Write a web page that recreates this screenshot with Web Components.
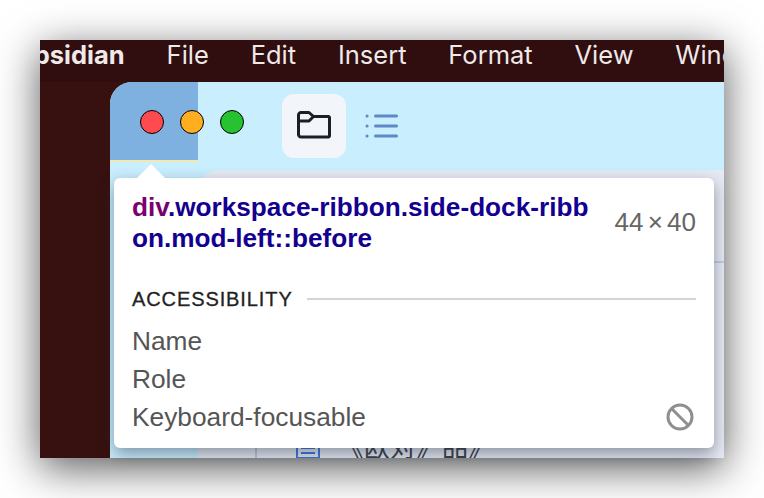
<!DOCTYPE html>
<html>
<head>
<meta charset="utf-8">
<title>Inspect tooltip</title>
<style>
html, body { margin: 0; background: #fff; }
body { width: 764px; height: 498px; overflow: hidden; padding: 40px; box-sizing: border-box; }
</style>
</head>
<body>
<shot-frame>
  <menu-bar slot="menu"></menu-bar>
  <app-window slot="app"></app-window>
  <inspect-tip slot="tip"></inspect-tip>
</shot-frame>

<script>
class ShotFrame extends HTMLElement {
  constructor() {
    super();
    this.attachShadow({ mode: 'open' }).innerHTML = `
      <style>
      :host { display: flex; flex-direction: column; position: relative; width: 684px; height: 418px; background: #36110f; box-shadow: 0 10px 40px rgba(0,0,0,.65); }
      .clip { display: flex; flex-direction: column; flex: 1; min-height: 0; overflow: hidden; }
      .desk { display: flex; flex: 1; min-height: 0; padding-left: 70px; }
      </style>
      <div class="clip">
        <slot name="menu"></slot>
        <div class="desk"><slot name="app"></slot></div>
      </div>
      <slot name="tip"></slot>
    `;
  }
}

class MenuBar extends HTMLElement {
  constructor() {
    super();
    this.attachShadow({ mode: 'open' }).innerHTML = `
      <style>
      :host { display: flex; height: 42px; flex: none; box-sizing: border-box; padding-bottom: 12px; align-items: center; background: #300d0f; color: #efe9e8; font: 25.5px/30px Inter, "Liberation Sans", sans-serif; overflow: hidden; white-space: nowrap; }
      b { font-weight: 700; margin-left: -26px; margin-right: 42px; flex: none; }
      span { margin-right: 41.8px; flex: none; }
      </style>
      <b>Obsidian</b><span>File</span><span>Edit</span><span>Insert</span><span>Format</span><span>View</span><span>Window</span>
    `;
  }
}

class AppWindow extends HTMLElement {
  constructor() {
    super();
    this.attachShadow({ mode: 'open' }).innerHTML = `
      <style>
      :host { display: flex; flex-direction: column; flex: 1; position: relative; min-width: 0; background: #c9eefe; border-top-left-radius: 22px; overflow: hidden; }
      .top { display: flex; height: 88px; flex: none; align-items: flex-start; padding: 12px 0 0 172px; box-sizing: border-box; }
      .btn { width: 64px; height: 64px; border-radius: 12px; display: flex; align-items: center; justify-content: center; margin-right: 14px; }
      .btn.on { background: #f2f6fb; }
      .btn.on svg { margin-bottom: 2px; }
      .btn.plain { width: 40px; }
      .hl { position: absolute; left: 0; top: 0; width: 88px; height: 78px; background: #7fb1e0; border-bottom: 2px solid #f2e8b0; }
      .lights { position: absolute; left: 30px; top: 28px; display: flex; gap: 16px; }
      .lights i { width: 24px; height: 24px; box-sizing: border-box; border-radius: 50%; border: 1px solid; }
      .r { background: #ff4a4f; border-color: #d8393f; }
      .y { background: #ffae22; border-color: #dc8f14; }
      .g { background: #27c232; border-color: #1fa528; }
      .body { display: flex; flex: 1; min-height: 0; padding-left: 88px; }
      .doc { flex: 1; display: flex; flex-direction: column; background: #e6eaf3; border-top-left-radius: 22px; overflow: hidden; }
      .tabs { height: 93px; flex: none; box-sizing: border-box; border-bottom: 2px solid #bcd0e6; }
      .pane { flex: 1; display: flex; min-height: 0; }
      .gutter { width: 57px; border-right: 2px solid #c3c8d0; flex: none; }
      .line { display: flex; align-items: flex-end; flex: 1; padding-left: 39px; gap: 18px; color: #3c4048; font: 26px/32px "Noto Sans CJK SC", sans-serif; white-space: nowrap; }
      .line svg { flex: none; }
      .line span { margin-bottom: -4px; }
      </style>
      <div class="hl"></div>
      <div class="lights"><i class="r"></i><i class="y"></i><i class="g"></i></div>
      <div class="top">
        <div class="btn on">
          <svg width="34" height="28" viewBox="0 0 34 28" fill="none" stroke="#1c2026" stroke-width="3" stroke-linejoin="round">
            <path d="M1.500 4a2.500 2.500 0 0 1 2.500-2.500h8l4.500 4h15a1.500 1.500 0 0 1 1 1v18.500a1.500 1.500 0 0 1-1 1h-27.500a2.500 2.500 0 0 1-2.500-2.500z"/>
            <path d="M1.500 10h10.500l4.500-4.500"/>
          </svg>
        </div>
        <div class="btn plain">
          <svg width="36" height="26" viewBox="0 0 36 26" fill="none" stroke="#5f88c6" stroke-width="3" stroke-linecap="round">
            <path d="M13.500 3h21M13.500 13h21M13.500 23h21"/>
            <path d="M5 3h.1M5 13h.1M5 23h.1"/>
          </svg>
        </div>
      </div>
      <div class="body">
        <div class="doc">
          <div class="tabs"></div>
          <div class="pane">
            <div class="gutter"></div>
            <div class="line">
              <svg width="24" height="26" viewBox="0 0 24 26" fill="none" stroke="#3d78dc" stroke-width="2"><path d="M1 0v26h22V0M5 6h14M5 11h14M5 16h14M5 21h14"/></svg>
              <span>《欧对》品》</span>
            </div>
          </div>
        </div>
      </div>
    `;
  }
}

class InspectTip extends HTMLElement {
  constructor() {
    super();
    this.attachShadow({ mode: 'open' }).innerHTML = `
      <style>
      :host { display: block; position: absolute; left: 74px; top: 138px; width: 600px; height: 270px; box-sizing: border-box; padding: 14px 18px 0; background: #fff; border-radius: 6px; color: #555; font: 26.3px/38px "Liberation Sans", Arial, sans-serif; box-shadow: 0 6px 16px rgba(30,40,60,.45); }
      .arrow { position: absolute; left: 23px; top: -14px; width: 0; height: 0; border: 14px solid transparent; border-top: 0; border-bottom-color: #fff; }
      .head { display: flex; justify-content: space-between; align-items: center; }
      .sel { width: 462px; font-size: 26.2px; font-weight: 700; line-height: 31px; color: #14008f; word-break: break-all; }
      .sel em { font-style: normal; color: #7a0071; }
      .size { color: #666; white-space: nowrap; font-size: 26px; word-spacing: -3px; margin-bottom: 2px; }
      .section { display: flex; align-items: center; gap: 14px; margin-top: 32px; height: 26px; color: #222; font-size: 20px; letter-spacing: .9px; -webkit-text-stroke: .3px #222; }
      .section::after { content: ""; flex: 1; height: 2px; background: #d4d4d4; }
      .rows { margin-top: 10px; }
      .row { display: flex; justify-content: space-between; align-items: center; height: 38px; }
      .row svg { margin-right: 2px; }
      </style>
      <div class="arrow"></div>
      <div class="head">
        <div class="sel"><em>div</em>.workspace-ribbon.side-dock-ribbon.mod-left::before</div>
        <div class="size">44 × 40</div>
      </div>
      <div class="section">ACCESSIBILITY</div>
      <div class="rows">
        <div class="row">Name</div>
        <div class="row">Role</div>
        <div class="row">Keyboard-focusable
          <svg width="28" height="28" viewBox="0 0 28 28" fill="none" stroke="#8f8f8f" stroke-width="3"><circle cx="14" cy="14" r="12"/><path d="M5.500 5.500l17 17"/></svg>
        </div>
      </div>
    `;
  }
}

customElements.define('shot-frame', ShotFrame);
customElements.define('menu-bar', MenuBar);
customElements.define('app-window', AppWindow);
customElements.define('inspect-tip', InspectTip);
</script>
</body>
</html>
